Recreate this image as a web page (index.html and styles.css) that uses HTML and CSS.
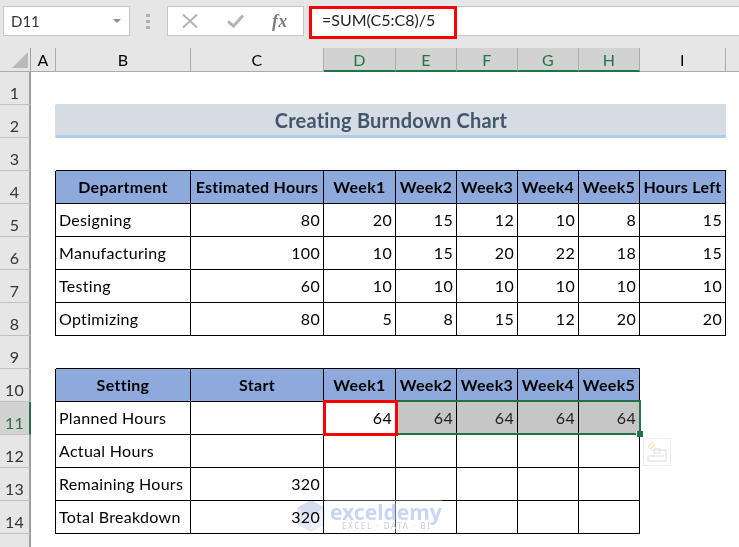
FILE: index.html
```html
<!doctype html>
<html>
  <head>
    <meta charset="utf-8" />
    <link rel="stylesheet" href="styles.css">
  </head>
  <body>
    <div class="formula-bar">
      <div class="name-box">
        <span>D11</span>
        <span class="name-arrow"></span>
      </div>
      <div class="grip"><i></i><i></i><i></i></div>
      <div class="formula-btns">
        <svg class="btn-icon" width="16" height="14" viewBox="0 0 16 14"><path d="M1 0.5 L15 13.5 M15 0.5 L1 13.5" stroke="#b4b4b4" stroke-width="2" fill="none"/></svg>
        <svg class="btn-icon" width="17" height="14" viewBox="0 0 17 14"><path d="M1 7.5 L6.5 12 L16 1.5" stroke="#b4b4b4" stroke-width="3" fill="none"/></svg>
        <span class="fx">fx</span>
      </div>
      <div class="formula-input">
        <div class="formula-text">=SUM(C5:C8)/5</div>
      </div>
    </div>

    <div class="sheet-wrap">
      <table class="sheet">
        <colgroup>
          <col class="c-head"><col class="c-a"><col class="c-b"><col class="c-c"><col class="c-d">
          <col class="c-w"><col class="c-w"><col class="c-w"><col class="c-w"><col class="c-i"><col class="c-j">
        </colgroup>
        <tr class="col-heads">
          <th class="corner"><svg width="16" height="16" viewBox="0 0 16 16"><path d="M16 0 V16 H0 Z" fill="#b9b9b9"/></svg></th>
          <th>A</th><th>B</th><th>C</th>
          <th class="sel">D</th><th class="sel">E</th><th class="sel">F</th><th class="sel">G</th><th class="sel">H</th>
          <th>I</th><th class="last"></th>
        </tr>
        <tr>
          <th class="row-head">1</th>
          <td></td><td colspan="8" class="title-top"></td><td></td>
        </tr>
        <tr>
          <th class="row-head">2</th>
          <td class="title-side"></td><td colspan="8" class="title">Creating Burndown Chart</td><td></td>
        </tr>
        <tr>
          <th class="row-head">3</th>
          <td></td><td class="above"></td><td class="above"></td><td class="above"></td><td class="above"></td><td class="above"></td><td class="above"></td><td class="above"></td><td class="above"></td><td></td>
        </tr>
        <tr>
          <th class="row-head">4</th>
          <td class="before"></td>
          <td class="hd">Department</td><td class="hd">Estimated Hours</td><td class="hd">Week1</td><td class="hd">Week2</td><td class="hd">Week3</td><td class="hd">Week4</td><td class="hd">Week5</td><td class="hd">Hours Left</td><td></td>
        </tr>
        <tr>
          <th class="row-head">5</th>
          <td class="before"></td>
          <td class="box">Designing</td><td class="box num">80</td><td class="box num">20</td><td class="box num">15</td><td class="box num">12</td><td class="box num">10</td><td class="box num">8</td><td class="box num">15</td><td></td>
        </tr>
        <tr>
          <th class="row-head">6</th>
          <td class="before"></td>
          <td class="box">Manufacturing</td><td class="box num">100</td><td class="box num">10</td><td class="box num">15</td><td class="box num">20</td><td class="box num">22</td><td class="box num">18</td><td class="box num">15</td><td></td>
        </tr>
        <tr>
          <th class="row-head">7</th>
          <td class="before"></td>
          <td class="box">Testing</td><td class="box num">60</td><td class="box num">10</td><td class="box num">10</td><td class="box num">10</td><td class="box num">10</td><td class="box num">10</td><td class="box num">10</td><td></td>
        </tr>
        <tr>
          <th class="row-head">8</th>
          <td class="before"></td>
          <td class="box">Optimizing</td><td class="box num">80</td><td class="box num">5</td><td class="box num">8</td><td class="box num">15</td><td class="box num">12</td><td class="box num">20</td><td class="box num">20</td><td></td>
        </tr>
        <tr>
          <th class="row-head">9</th>
          <td></td><td class="above"></td><td class="above"></td><td class="above"></td><td class="above"></td><td class="above"></td><td class="above"></td><td class="above"></td><td></td><td></td>
        </tr>
        <tr>
          <th class="row-head">10</th>
          <td class="before"></td>
          <td class="hd">Setting</td><td class="hd">Start</td><td class="hd">Week1</td><td class="hd">Week2</td><td class="hd">Week3</td><td class="hd">Week4</td><td class="hd">Week5</td><td></td><td></td>
        </tr>
        <tr>
          <th class="row-head sel-row">11</th>
          <td class="before"></td>
          <td class="box">Planned Hours</td><td class="box"></td><td class="box num">64</td><td class="box num filled">64</td><td class="box num filled">64</td><td class="box num filled">64</td><td class="box num filled">64</td><td></td><td></td>
        </tr>
        <tr>
          <th class="row-head">12</th>
          <td class="before"></td>
          <td class="box">Actual Hours</td><td class="box"></td><td class="box"></td><td class="box"></td><td class="box"></td><td class="box"></td><td class="box"></td><td></td><td></td>
        </tr>
        <tr>
          <th class="row-head">13</th>
          <td class="before"></td>
          <td class="box">Remaining Hours</td><td class="box num">320</td><td class="box"></td><td class="box"></td><td class="box"></td><td class="box"></td><td class="box"></td><td></td><td></td>
        </tr>
        <tr>
          <th class="row-head">14</th>
          <td class="before"></td>
          <td class="box">Total Breakdown</td><td class="box num">320</td><td class="box"></td><td class="box"></td><td class="box"></td><td class="box"></td><td class="box"></td><td></td><td></td>
        </tr>
        <tr>
          <th class="row-head"></th>
          <td colspan="10"></td>
        </tr>
      </table>

      <div class="range-box"></div>
      <div class="fill-handle"></div>
      <div class="active-box"></div>

      <div class="paste-icon">
        <svg width="22" height="22" viewBox="0 0 22 22">
          <path d="M2 6 L7 1 M4 8 L9 3" stroke="#f1eec4" stroke-width="2" fill="none"/>
          <path d="M5 9 H20 V20 H2 V15 H6" stroke="#e6e8e8" stroke-width="1.5" fill="none"/>
          <path d="M8 8 H14 V12 H8 Z M5 15 H18" stroke="#e6e8e8" stroke-width="1.5" fill="none"/>
        </svg>
      </div>

      <div class="watermark">
        <svg class="wm-logo" width="28" height="32" viewBox="0 0 28 32">
          <path d="M14 0 L28 8 V24 L14 32 L0 24 V8 Z" fill="#e3e8f4"/>
          <path d="M14 0 L28 8 L14 16 L0 8 Z" fill="#d5ddf0"/>
          <path d="M14 16 L28 8 V24 L14 32 Z" fill="#edf0f7"/>
        </svg>
        <div class="wm-text">
          <div class="wm-name">exceldemy</div>
          <div class="wm-sub">EXCEL · DATA · BI</div>
        </div>
      </div>
    </div>
  </body>
</html>
```

FILE: styles.css
```css
* {
  margin: 0;
  padding: 0;
  box-sizing: border-box;
}

body {
  width: 739px;
  height: 547px;
  overflow: hidden;
  background: white;
  font-family: Lato, 'Liberation Sans', sans-serif;
  font-size: 16px;
  letter-spacing: 0.3px;
  color: #000;
}

/* formula bar */

.formula-bar {
  display: flex;
  align-items: flex-start;
  height: 48px;
  padding: 6px 0 0 3px;
  background: #e6e6e6;
}

.name-box {
  display: flex;
  align-items: center;
  justify-content: space-between;
  width: 127px;
  height: 30px;
  padding: 0 8px 0 7px;
  background: white;
  border: 1px solid #c6c6c6;
  font-size: 15px;
  letter-spacing: 0;
  color: #333;
}

.name-arrow {
  border-left: 4px solid transparent;
  border-right: 4px solid transparent;
  border-top: 4px solid #8a8a8a;
}

.grip {
  display: flex;
  flex-direction: column;
  gap: 3px;
  width: 37px;
  padding: 8px 0 0 16px;
}

.grip i {
  display: block;
  width: 4px;
  height: 3px;
  background: #b0b0b0;
}

.formula-btns {
  display: flex;
  align-items: center;
  width: 137px;
  height: 30px;
  padding-left: 14px;
  background: white;
  border: 1px solid #c6c6c6;
}

.btn-icon {
  margin-right: 29px;
}

.fx {
  font-family: 'Liberation Serif', serif;
  font-style: italic;
  font-weight: bold;
  font-size: 18px;
  color: #7d7d7d;
  margin-left: -1px;
}

.formula-input {
  position: relative;
  flex: 1;
  height: 30px;
  margin-left: 5px;
  background: white;
  border-top: 1px solid #c6c6c6;
  border-bottom: 1px solid #c6c6c6;
}

.formula-text {
  position: absolute;
  left: 0;
  top: -1px;
  width: 148px;
  height: 33px;
  padding: 1px 0 0 10px;
  border: 3px solid #ff0000;
  background: white;
  letter-spacing: 0;
  color: #222;
}

/* sheet */

.sheet-wrap {
  position: relative;
}

.sheet {
  table-layout: fixed;
  width: 739px;
  border-collapse: separate;
  border-spacing: 0;
}

.c-head { width: 31px; }
.c-a { width: 25px; }
.c-b { width: 135px; }
.c-c { width: 133px; }
.c-d { width: 72px; }
.c-w { width: 61px; }
.c-i { width: 86px; }
.c-j { width: 13px; }

.sheet tr {
  height: 33px;
}

.sheet td {
  padding: 0 3px 2px;
  white-space: nowrap;
}

.col-heads {
  background: #e6e6e6;
}

.sheet .col-heads {
  height: 24px;
}

.col-heads th {
  font-weight: normal;
  height: 24px;
  border-right: 1px solid #ababab;
  border-bottom: 1px solid #ababab;
}

.col-heads .corner {
  position: relative;
  border-right: 1px solid #9f9f9f;
  text-align: right;
  line-height: 0;
  padding-right: 2px;
}

.col-heads .last {
  border-right: none;
}

.col-heads .sel {
  background: #d2d2d2;
  color: #217346;
  border-bottom: 2px solid #217346;
}

.row-head {
  padding-top: 8px;
  font-weight: normal;
  color: #333;
  background: #e6e6e6;
  border-right: 2px solid #9f9f9f;
  border-bottom: 1px solid #c0c0c0;
}

.sel-row {
  background: #d2d2d2;
  color: #217346;
  border-right: 2px solid #217346;
}

.sheet .title {
  padding-bottom: 0;
  background: #d5dce4;
  border-bottom: 3px solid #afcdea;
  color: #44546a;
  font-size: 20px;
  letter-spacing: 0.2px;
  font-weight: bold;
  text-align: center;
}

.title-top {
  border-bottom: 1px solid #d5dce4;
}

.title-side {
  border-right: 1px solid #d5dce4;
}

.above {
  border-bottom: 1px solid #000;
}

.before {
  border-right: 1px solid #000;
}

.box,
.hd {
  border-right: 1px solid #000;
  border-bottom: 1px solid #000;
}

.hd {
  background: #8ea9db;
  font-weight: bold;
  text-align: center;
}

.num {
  text-align: right;
}

.filled {
  background: #c6c6c6;
  color: #222;
}

/* things lying over the grid */

.range-box {
  position: absolute;
  left: 396px;
  top: 352px;
  width: 245px;
  height: 35px;
  border: 2px solid #217346;
}

.fill-handle {
  position: absolute;
  left: 636px;
  top: 383px;
  width: 7px;
  height: 6px;
  background: #217346;
  border-left: 1px solid white;
}

.active-box {
  position: absolute;
  left: 323px;
  top: 352px;
  width: 75px;
  height: 36px;
  border: 3px solid #ff0000;
}

.paste-icon {
  position: absolute;
  left: 643px;
  top: 390px;
  width: 28px;
  height: 28px;
  padding: 2px;
  border: 1px solid #ebeeee;
}

.watermark {
  position: absolute;
  left: 297px;
  top: 452px;
  display: flex;
  align-items: center;
}

.wm-logo {
  mix-blend-mode: multiply;
}

.wm-text {
  height: 32px;
  padding: 2px 0 0 5px;
  background: rgba(255, 255, 255, 0.3);
  line-height: 1;
  letter-spacing: 0;
}

.wm-name {
  font-family: 'Noto Sans', sans-serif;
  font-size: 21px;
  font-weight: bold;
  color: #c9d6f3;
  line-height: 20px;
}

.wm-sub {
  font-family: 'Noto Sans', sans-serif;
  font-size: 8px;
  letter-spacing: 1.6px;
  color: #c9cdd4;
  padding-left: 12px;
  margin-top: 0;
}
```
